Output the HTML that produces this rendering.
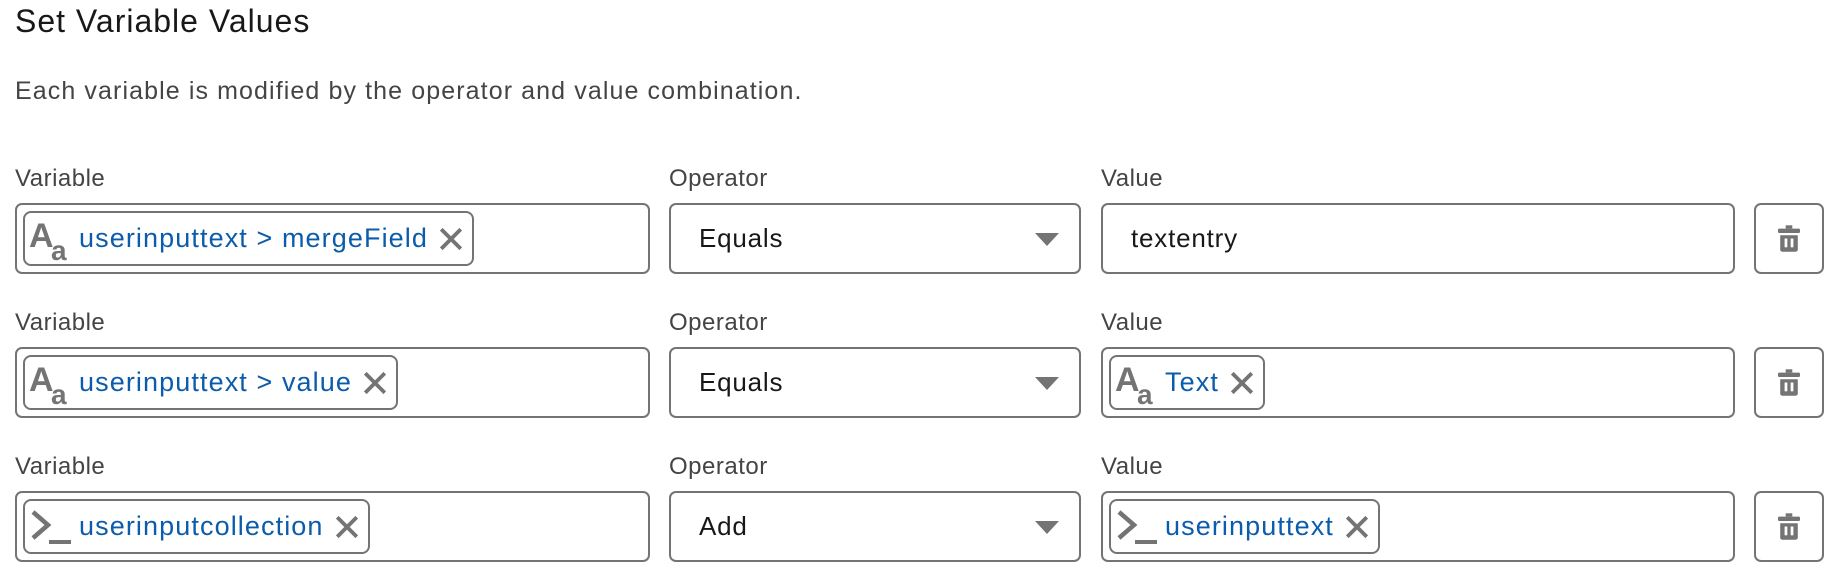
<!DOCTYPE html>
<html><head><meta charset="utf-8"><style>
body{margin:0;width:1836px;height:578px;background:#fff;font-family:"Liberation Sans",sans-serif;color:#181818;position:relative;overflow:hidden}
.a{position:absolute}
.t{left:15px;top:3px;font-size:32px;color:#181818;letter-spacing:1px}
.s{left:15px;top:77px;font-size:25px;color:#444;letter-spacing:1.1px}
.l{font-size:24px;color:#444;letter-spacing:0.5px}
.box{position:absolute;border:2px solid #747474;border-radius:7px;box-sizing:border-box;height:71px}
.pill{position:absolute;left:6px;top:6px;height:55px;border:2px solid #747474;border-radius:8px;box-sizing:border-box;display:flex;align-items:center;padding:0 8px 0 4px;color:#0b5cab;font-size:27px;letter-spacing:1.1px;white-space:nowrap}
.pill svg{flex:none}
.x{margin-left:10px}
.txt{position:absolute;left:28px;top:0;line-height:67px;font-size:26px;letter-spacing:0.8px;color:#181818}
.arr{position:absolute;right:20px;top:28px;width:0;height:0;border-left:12px solid transparent;border-right:12px solid transparent;border-top:13px solid #747474}
.del{position:absolute;left:1754px;width:70px;height:71px;border:2px solid #747474;border-radius:7px;box-sizing:border-box}
.del svg{position:absolute;left:22px;top:20px}
</style></head><body>
<div class="a t">Set Variable Values</div>
<div class="a s">Each variable is modified by the operator and value combination.</div>

<div class="a l" style="left:15px;top:165px">Variable</div>
<div class="a l" style="left:669px;top:165px">Operator</div>
<div class="a l" style="left:1101px;top:165px">Value</div>
<div class="box" style="left:15px;top:203px;width:635px">
 <div class="pill"><svg width="46" height="44" viewBox="0 0 46 44"><text x="0" y="30" font-family="Liberation Sans" font-weight="bold" font-size="34" fill="#747474">A</text><text x="22" y="43" font-family="Liberation Sans" font-weight="bold" font-size="28" fill="#747474">a</text></svg><span style="margin-left:4px">userinputtext &gt; mergeField</span><svg class="x" width="26" height="26" viewBox="0 0 24 24"><path d="M3 3L21 21M21 3L3 21" stroke="#747474" stroke-width="3.5"/></svg></div>
</div>
<div class="box" style="left:669px;top:203px;width:412px"><div class="txt">Equals</div><div class="arr"></div></div>
<div class="box" style="left:1101px;top:203px;width:634px"><div class="txt">textentry</div></div>
<div class="del" style="top:203px"><svg width="22" height="27" viewBox="0 0 20 24"><rect x="7" y="0" width="6" height="3" fill="#747474"/><rect x="0" y="3" width="20" height="4" rx="1" fill="#747474"/><path d="M2 9H18V22Q18 24 16 24H4Q2 24 2 22Z" fill="#747474"/><rect x="6" y="12" width="2.5" height="8" fill="#fff"/><rect x="11.5" y="12" width="2.5" height="8" fill="#fff"/></svg></div>

<div class="a l" style="left:15px;top:309px">Variable</div>
<div class="a l" style="left:669px;top:309px">Operator</div>
<div class="a l" style="left:1101px;top:309px">Value</div>
<div class="box" style="left:15px;top:347px;width:635px">
 <div class="pill"><svg width="46" height="44" viewBox="0 0 46 44"><text x="0" y="30" font-family="Liberation Sans" font-weight="bold" font-size="34" fill="#747474">A</text><text x="22" y="43" font-family="Liberation Sans" font-weight="bold" font-size="28" fill="#747474">a</text></svg><span style="margin-left:4px">userinputtext &gt; value</span><svg class="x" width="26" height="26" viewBox="0 0 24 24"><path d="M3 3L21 21M21 3L3 21" stroke="#747474" stroke-width="3.5"/></svg></div>
</div>
<div class="box" style="left:669px;top:347px;width:412px"><div class="txt">Equals</div><div class="arr"></div></div>
<div class="box" style="left:1101px;top:347px;width:634px">
 <div class="pill"><svg width="46" height="44" viewBox="0 0 46 44"><text x="0" y="30" font-family="Liberation Sans" font-weight="bold" font-size="34" fill="#747474">A</text><text x="22" y="43" font-family="Liberation Sans" font-weight="bold" font-size="28" fill="#747474">a</text></svg><span style="margin-left:4px">Text</span><svg class="x" width="26" height="26" viewBox="0 0 24 24"><path d="M3 3L21 21M21 3L3 21" stroke="#747474" stroke-width="3.5"/></svg></div>
</div>
<div class="del" style="top:347px"><svg width="22" height="27" viewBox="0 0 20 24"><rect x="7" y="0" width="6" height="3" fill="#747474"/><rect x="0" y="3" width="20" height="4" rx="1" fill="#747474"/><path d="M2 9H18V22Q18 24 16 24H4Q2 24 2 22Z" fill="#747474"/><rect x="6" y="12" width="2.5" height="8" fill="#fff"/><rect x="11.5" y="12" width="2.5" height="8" fill="#fff"/></svg></div>

<div class="a l" style="left:15px;top:453px">Variable</div>
<div class="a l" style="left:669px;top:453px">Operator</div>
<div class="a l" style="left:1101px;top:453px">Value</div>
<div class="box" style="left:15px;top:491px;width:635px">
 <div class="pill"><svg width="46" height="44" viewBox="0 0 46 44"><path d="M4 7L19 20L4 33" fill="none" stroke="#747474" stroke-width="4.5"/><rect x="20" y="35" width="22" height="4" fill="#747474"/></svg><span style="margin-left:4px">userinputcollection</span><svg class="x" width="26" height="26" viewBox="0 0 24 24"><path d="M3 3L21 21M21 3L3 21" stroke="#747474" stroke-width="3.5"/></svg></div>
</div>
<div class="box" style="left:669px;top:491px;width:412px"><div class="txt">Add</div><div class="arr"></div></div>
<div class="box" style="left:1101px;top:491px;width:634px">
 <div class="pill"><svg width="46" height="44" viewBox="0 0 46 44"><path d="M4 7L19 20L4 33" fill="none" stroke="#747474" stroke-width="4.5"/><rect x="20" y="35" width="22" height="4" fill="#747474"/></svg><span style="margin-left:4px">userinputtext</span><svg class="x" width="26" height="26" viewBox="0 0 24 24"><path d="M3 3L21 21M21 3L3 21" stroke="#747474" stroke-width="3.5"/></svg></div>
</div>
<div class="del" style="top:491px"><svg width="22" height="27" viewBox="0 0 20 24"><rect x="7" y="0" width="6" height="3" fill="#747474"/><rect x="0" y="3" width="20" height="4" rx="1" fill="#747474"/><path d="M2 9H18V22Q18 24 16 24H4Q2 24 2 22Z" fill="#747474"/><rect x="6" y="12" width="2.5" height="8" fill="#fff"/><rect x="11.5" y="12" width="2.5" height="8" fill="#fff"/></svg></div>
</body></html>
